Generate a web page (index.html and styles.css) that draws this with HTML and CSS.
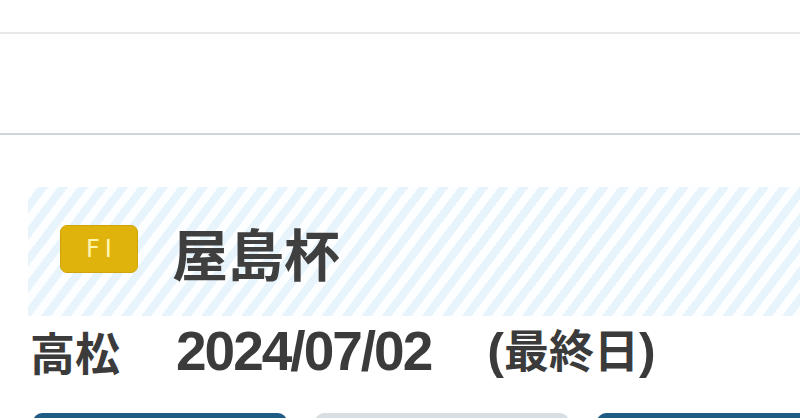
FILE: index.html
```html
<!DOCTYPE html>
<html lang="ja">
<head>
<meta charset="utf-8">
<title>屋島杯</title>
<link rel="stylesheet" href="styles.css">
</head>
<body>
<div class="page">
  <div class="topbar"></div>
  <div class="navbar"></div>
  <section class="race">
    <div class="banner">
      <span class="grade">FI</span>
      <h1 class="title">屋島杯</h1>
    </div>
    <div class="meta">
      <span class="place">高松</span>
      <span class="date">2024/07/02</span>
      <span class="day"><span class="paren">(</span>最終日<span class="paren">)</span></span>
    </div>
    <div class="tabs">
      <div class="tab tab-dark"></div>
      <div class="tab tab-light"></div>
      <div class="tab tab-dark"></div>
    </div>
  </section>
</div>
</body>
</html>
```

FILE: styles.css
```css
html, body {
  margin: 0;
  padding: 0;
  background: #ffffff;
}
body {
  font-family: "Noto Sans CJK JP", "Noto Sans", sans-serif;
  color: #3d3d3d;
  overflow: hidden;
}
.page {
  width: 800px;
  height: 418px;
  overflow: hidden;
}
.topbar {
  height: 32px;
  border-bottom: 2px solid #e8e8e8;
}
.navbar {
  height: 99px;
  border-bottom: 2px solid #cbd6df;
}
.race {
  padding: 52px 0 0 28px;
}
.banner {
  height: 129px;
  display: flex;
  align-items: center;
  padding-left: 32px;
  background: repeating-linear-gradient(127deg, #fcfeff 0 8px, #e8f4fc 8px 16px);
}
.grade {
  width: 78px;
  height: 48px;
  box-sizing: border-box;
  margin-top: -6px;
  border-radius: 7px;
  background: #e0b30c;
  border: 1px solid #cfa40a;
  color: #fff7b0;
  font-family: "DejaVu Sans", sans-serif;
  font-size: 24px;
  letter-spacing: 5px;
  padding-left: 5px;
  display: flex;
  align-items: center;
  justify-content: center;
  font-weight: 400;
}
.title {
  margin: 0 0 0 34px;
  font-size: 56px;
  font-weight: 700;
  line-height: 1;
  color: #3f3f3f;
}
.meta {
  display: flex;
  align-items: center;
  height: 70px;
  padding-left: 2px;
  font-weight: 700;
  color: #3b3b3b;
}
.place {
  font-size: 45px;
  line-height: 1;
}
.date {
  margin-left: 56px;
  font-family: "Liberation Sans", sans-serif;
  font-size: 55px;
  font-weight: 700;
  line-height: 1;
  letter-spacing: -2px;
}
.day {
  margin-left: 56px;
  font-size: 45px;
  line-height: 1;
}
.paren {
  font-family: "Liberation Sans", sans-serif;
  font-size: 50px;
}
.tabs {
  display: grid;
  grid-template-columns: 254px 254px 254px;
  gap: 28px;
  margin-top: 27px;
  padding-left: 5px;
}
.tab {
  height: 60px;
  border-radius: 9px;
}
.tab-dark {
  background: #1f5c84;
}
.tab-light {
  background: #d7dfe4;
}
```
